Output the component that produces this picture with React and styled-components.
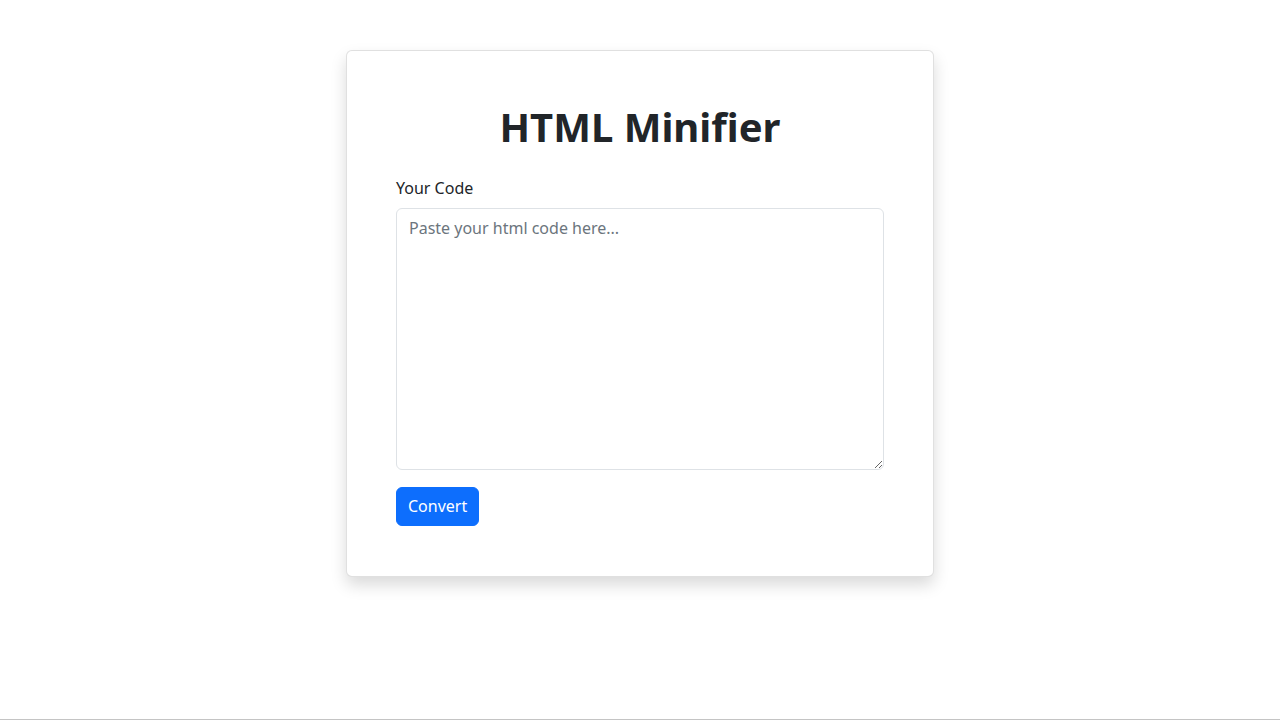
import React from "react";
import styled, { createGlobalStyle } from "styled-components";

const GlobalStyle = createGlobalStyle`
  html, body { margin: 0; padding: 0; background: #fff; }
  body {
    font-family: "Noto Sans", "Open Sans", Arial, sans-serif;
    color: #212529;
    font-size: 16px;
    line-height: 1.5;
  }
  * { box-sizing: border-box; }
`;

const Page = styled.div`
  height: 720px;
  border-bottom: 1px solid #c4c4c4;
  display: flex;
  justify-content: center;
  align-items: flex-start;
  padding-top: 50px;
`;

const Card = styled.div`
  width: 588px;
  background: #fff;
  border: 1px solid rgba(0, 0, 0, 0.12);
  border-radius: 6px;
  box-shadow: 0 8px 16px rgba(0, 0, 0, 0.15);
  padding: 49px 49px 50px;
  display: flex;
  flex-direction: column;
`;

const Title = styled.h1`
  margin: 3px 0 25px;
  font-size: 40px;
  line-height: 48px;
  font-weight: 700;
  text-align: center;
  color: #212529;
`;

const Label = styled.label`
  display: block;
  font-size: 16px;
  line-height: 24px;
  margin-bottom: 8px;
  color: #212529;
`;

const TextArea = styled.textarea`
  display: block;
  width: 100%;
  height: 262px;
  padding: 7px 12px 6px;
  font-family: inherit;
  font-size: 16px;
  line-height: 1.5;
  color: #212529;
  border: 1px solid #dee2e6;
  border-radius: 6px;
  resize: vertical;
  margin-bottom: 17px;
  &::placeholder { color: #6c757d; }
  &:focus { outline: none; }
`;

const Button = styled.button`
  align-self: flex-start;
  background: #0d6efd;
  color: #fff;
  border: 1px solid #0d6efd;
  border-radius: 6px;
  font-family: inherit;
  font-size: 16px;
  line-height: 24px;
  padding: 6px 11px 7px;
  cursor: pointer;
`;

export default function App() {
  return (
    <>
      <GlobalStyle />
      <Page>
        <Card>
          <Title>HTML Minifier</Title>
          <Label htmlFor="code">Your Code</Label>
          <TextArea id="code" placeholder="Paste your html code here..." />
          <Button type="button">Convert</Button>
        </Card>
      </Page>
    </>
  );
}
